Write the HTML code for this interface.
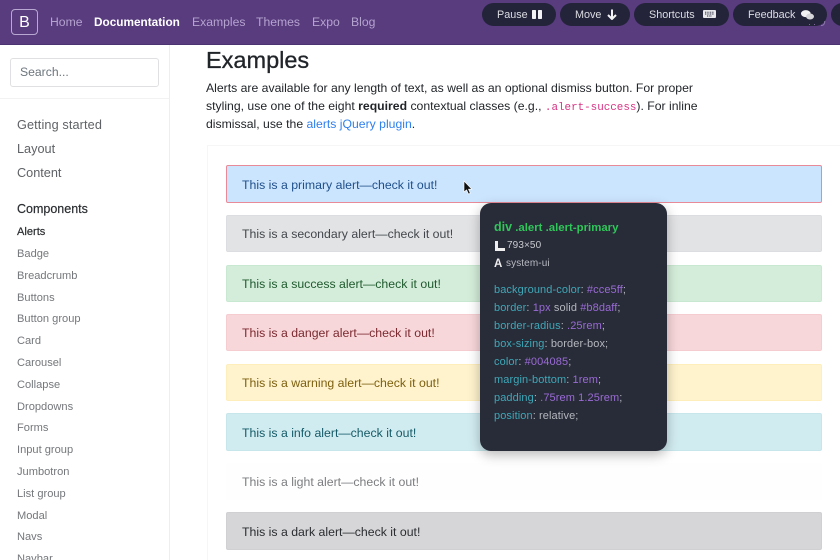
<!DOCTYPE html>
<html><head><meta charset="utf-8"><style>
html,body{margin:0;padding:0;width:840px;height:560px;overflow:hidden}
body{background:#fff;font-family:"Liberation Sans",sans-serif;color:#212529}
#w{position:relative;width:840px;height:560px;overflow:hidden}
.a{position:absolute;white-space:nowrap}
#nav{left:0;top:0;width:840px;height:45px;background:#583c7e;border-bottom:1px solid #4a3370;box-sizing:border-box}
.n{top:15px;font-size:12.2px;line-height:15px;color:#b5a3cf}
.b{top:3px;height:23px;border-radius:12px;background:#23233a;color:#dcdde2;font-size:10.8px;line-height:24px;box-sizing:border-box}
.s{left:17px;font-size:12.7px;line-height:16px;color:#5f6266}
.t{left:17px;font-size:11.1px;line-height:14px;color:#74777b}
.al{left:226px;width:596px;height:38px;box-sizing:border-box;border-radius:2px;border:1px solid;font-size:12.3px;line-height:38px;padding-left:15px}
.p{left:494px;font-size:11px;letter-spacing:.1px;line-height:14px;color:#b4b7bd}
.k{color:#3fa8b8}.v{color:#9a6bd6}
</style></head><body><div id="w">
<div class="a" id="nav"></div>
<div class="a" style="left:11px;top:9px;width:27px;height:26px;box-sizing:border-box;border:1px solid #b9a8d2;border-radius:4px;color:#fff;font-size:16px;line-height:25px;text-align:center">B</div>
<div class="a n" style="left:50px;top:15px">Home</div>
<div class="a n" style="left:94px;color:#fff;font-weight:bold;font-size:11.8px">Documentation</div>
<div class="a n" style="left:192px">Examples</div>
<div class="a n" style="left:256px">Themes</div>
<div class="a n" style="left:312px">Expo</div>
<div class="a n" style="left:351px">Blog</div>

<div class="a b" style="left:482px;width:74px;padding-left:15px">Pause<svg class="a" style="left:50px;top:7px" width="12" height="10"><rect x="0" y="0" width="4" height="9" rx=".7" fill="#f2f2f5"/><rect x="6" y="0" width="4" height="9" rx=".7" fill="#f2f2f5"/></svg></div>
<div class="a b" style="left:560px;width:70px;padding-left:15px">Move<svg class="a" style="left:47px;top:6px" width="10" height="11"><path d="M5 .5V9.500M1 6l4 4 4-4" stroke="#f2f2f5" stroke-width="2" fill="none"/></svg></div>
<div class="a b" style="left:634px;width:95px;padding-left:15px">Shortcuts<svg class="a" style="left:69px;top:7px" width="13" height="9"><rect x="0" y="0" width="13" height="8" rx="1" fill="#e8e8ec"/><path d="M2 2.200h9M2 4h9M4 6h5" stroke="#23233a" stroke-width=".9" stroke-dasharray="1 .7"/></svg></div>
<div class="a b" style="left:733px;width:94px;padding-left:15px">Feedback<svg class="a" style="left:68px;top:7px" width="13" height="11"><ellipse cx="4.800" cy="3.600" rx="4.800" ry="3.500" fill="#f2f2f5"/><ellipse cx="9" cy="6.500" rx="4" ry="3" fill="#d5d5da"/></svg></div>
<div class="a b" style="left:831px;width:40px"></div>
<svg class="a" style="left:805px;top:19px" width="24" height="9"><path d="M16 6.500c2.500 0 3.800-1 3.800-4.500" stroke="#8f7cab" stroke-width="1" fill="none"/><path d="M4 5.500h1M9 5.500h1" stroke="#7d6a99" stroke-width="1"/></svg>

<!-- sidebar -->
<div class="a" style="left:169px;top:45px;width:1px;height:515px;background:#eeeeef"></div>
<div class="a" style="left:0;top:98px;width:169px;height:1px;background:#f2f2f3"></div>
<div class="a" style="left:10px;top:58px;width:149px;height:29px;box-sizing:border-box;border:1px solid #e0e0e2;border-radius:3px;font-size:12.2px;line-height:27px;padding-left:9px;color:#6c757d">Search...</div>
<div class="a s" style="top:117px;letter-spacing:.12px">Getting started</div>
<div class="a s" style="top:141px">Layout</div>
<div class="a s" style="top:165px">Content</div>
<div class="a s" style="top:201px;color:#2b2e31;font-size:12.5px;-webkit-text-stroke:.2px #2b2e31">Components</div>
<div class="a t" style="top:225px;color:#2b2e31;-webkit-text-stroke:.2px #2b2e31">Alerts</div>
<div class="a t" style="top:247px">Badge</div>
<div class="a t" style="top:269px">Breadcrumb</div>
<div class="a t" style="top:291px">Buttons</div>
<div class="a t" style="top:312px">Button group</div>
<div class="a t" style="top:334px">Card</div>
<div class="a t" style="top:356px">Carousel</div>
<div class="a t" style="top:378px">Collapse</div>
<div class="a t" style="top:400px">Dropdowns</div>
<div class="a t" style="top:421px">Forms</div>
<div class="a t" style="top:443px">Input group</div>
<div class="a t" style="top:465px">Jumbotron</div>
<div class="a t" style="top:487px">List group</div>
<div class="a t" style="top:509px">Modal</div>
<div class="a t" style="top:530px">Navs</div>
<div class="a t" style="top:552px">Navbar</div>

<!-- main -->
<div class="a" style="left:206px;top:45px;font-size:23.5px;line-height:30px;color:#212529;-webkit-text-stroke:.3px #212529">Examples</div>
<div class="a" style="left:206px;top:79px;font-size:12.22px;line-height:18px">Alerts are available for any length of text, as well as an optional dismiss button. For proper<br>styling, use one of the eight <b>required</b> contextual classes (e.g., <span style="font-family:'Liberation Mono',monospace;font-size:10.9px;line-height:0;color:#d63384">.alert-success</span>). For inline<br>dismissal, use the <span style="color:#2f80ed">alerts jQuery plugin</span>.</div>
<div class="a" style="left:207px;top:145px;width:640px;height:430px;box-sizing:border-box;border:1px solid #f6f6f6"></div>

<div class="a al" style="top:165px;background:#cce5ff;border-color:#e88a97;color:#1f4f8a">This is a primary alert—check it out!</div>
<div class="a al" style="top:215px;height:37px;line-height:36px;background:#e2e3e5;border-color:#dcdde0;color:#43474b">This is a secondary alert—check it out!</div>
<div class="a al" style="top:265px;height:37px;line-height:36px;background:#d4edda;border-color:#c9e8d1;color:#1f5a2e">This is a success alert—check it out!</div>
<div class="a al" style="top:314px;height:37px;line-height:36px;background:#f8d7da;border-color:#f5cdd1;color:#7a2a30">This is a danger alert—check it out!</div>
<div class="a al" style="top:364px;height:37px;line-height:36px;background:#fff3cd;border-color:#feeebb;color:#7d6010">This is a warning alert—check it out!</div>
<div class="a al" style="top:413px;background:#d1ecf1;border-color:#c6e6ec;color:#155a66">This is a info alert—check it out!</div>
<div class="a al" style="top:463px;height:37px;line-height:36px;background:#fefefe;border-color:#fefefe;color:#7c7d80">This is a light alert—check it out!</div>
<div class="a al" style="top:512px;background:#d6d6d8;border-color:#d0d0d2;color:#2a2d30">This is a dark alert—check it out!</div>

<svg class="a" style="left:462px;top:180px" width="12" height="16"><path d="M2 1V12L4.600 9.800 6.500 14 8.300 13.200 6.500 9.200H9.800Z" fill="#111" stroke="#fff" stroke-width=".6"/></svg>

<!-- tooltip -->
<div class="a" style="left:480px;top:203px;width:187px;height:248px;border-radius:11px;background:#282b38;box-shadow:0 4px 12px rgba(0,0,0,.28)"></div>
<div class="a" style="left:494px;top:220px;font-size:11.4px;line-height:15px;font-weight:bold;color:#2fc65a"><span style="font-size:12.5px">div</span> .alert .alert-primary</div>
<svg class="a" style="left:494px;top:240px" width="12" height="12"><path d="M1 1H4V8H11V11H1Z" fill="#eee"/></svg>
<div class="a p" style="left:507px;top:239px;color:#c9cbd0;font-size:10px">793×50</div>
<div class="a" style="left:494px;top:257px;font-size:11.5px;line-height:14px;font-weight:bold;color:#eee">A</div>
<div class="a p" style="left:506px;top:257px;color:#b9bbc1;font-size:10px">system-ui</div>
<div class="a p" style="top:283px"><span class="k">background-color</span>: <span class="v">#cce5ff</span>;</div>
<div class="a p" style="top:301px"><span class="k">border</span>: <span class="v">1px</span> solid <span class="v">#b8daff</span>;</div>
<div class="a p" style="top:319px"><span class="k">border-radius</span>: <span class="v">.25rem</span>;</div>
<div class="a p" style="top:337px"><span class="k">box-sizing</span>: border-box;</div>
<div class="a p" style="top:355px"><span class="k">color</span>: <span class="v">#004085</span>;</div>
<div class="a p" style="top:373px"><span class="k">margin-bottom</span>: <span class="v">1rem</span>;</div>
<div class="a p" style="top:391px"><span class="k">padding</span>: <span class="v">.75rem 1.25rem</span>;</div>
<div class="a p" style="top:409px"><span class="k">position</span>: relative;</div>
</div></body></html>
